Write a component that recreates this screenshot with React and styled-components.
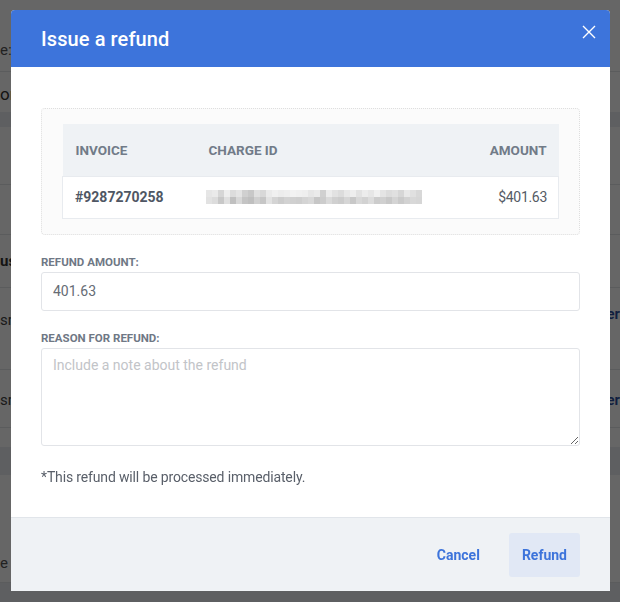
import React from 'react';
import styled, { createGlobalStyle } from 'styled-components';

const GlobalStyle = createGlobalStyle`
  * { box-sizing: border-box; }
  html, body { margin: 0; padding: 0; background: #fff; }
  body {
    font-family: Roboto, "Liberation Sans", Arial, sans-serif;
    width: 620px;
    height: 602px;
    overflow: hidden;
  }
`;

/* ---------- page behind the dialog ---------- */

const Page = styled.div`
  display: flex;
  flex-direction: column;
  width: 620px;
  height: 602px;
`;

const PageRow = styled.div`
  display: flex;
  justify-content: space-between;
  align-items: flex-start;
  height: ${p => p.h}px;
  padding-top: ${p => p.pt || 0}px;
  border-bottom: ${p => (p.line ? '1px solid #e3e5e9' : 'none')};
  background: ${p => (p.band ? '#eceef2' : '#fff')};
  font-size: ${p => p.fs || 15}px;
  line-height: 16px;
  color: #333;
`;

const LeftBit = styled.span`
  font-weight: ${p => (p.bold ? 700 : 400)};
  color: ${p => p.c || '#333'};
`;

const RightBit = styled.span`
  margin-top: ${p => p.mt || 0}px;
  color: #2a4d9c;
  font-weight: 600;
`;

/* ---------- dialog ---------- */

const Overlay = styled.div`
  position: fixed;
  inset: 0;
  background: rgba(0, 0, 0, 0.6);
  display: flex;
  justify-content: center;
  align-items: flex-start;
  padding: 10px 10px 0 11px;
`;

const Modal = styled.div`
  position: relative;
  width: 599px;
  height: 581px;
  background: #fff;
  border-radius: 4px 4px 0 0;
  display: flex;
  flex-direction: column;
  overflow: hidden;
`;

const Header = styled.div`
  height: 57px;
  flex: none;
  background: #3d74db;
  display: flex;
  align-items: center;
  padding: 0 30px;
`;

const Title = styled.h2`
  margin: 0;
  font-size: 20px;
  font-weight: 500;
  color: #fff;
  letter-spacing: 0.1px;
`;

const CloseButton = styled.button`
  position: absolute;
  top: 15px;
  right: 14px;
  width: 14px;
  height: 14px;
  padding: 0;
  border: none;
  background: transparent;
  cursor: pointer;
  display: flex;
`;

const Body = styled.div`
  flex: 1;
  padding: 41px 30px 0;
  display: flex;
  flex-direction: column;
`;

const Card = styled.div`
  background: #fbfbfb;
  border: 1px dotted #dedede;
  border-radius: 4px;
  padding: 15px 20px;
  margin-bottom: 19px;
`;

const Table = styled.table`
  width: 100%;
  border-collapse: collapse;
`;

const HeadCell = styled.th`
  height: 52px;
  background: #eff2f5;
  padding: 0 ${p => (p.right ? 12 : 13)}px;
  text-align: ${p => (p.right ? 'right' : 'left')};
  width: ${p => p.w || 'auto'};
  font-size: 13.5px;
  font-weight: 700;
  color: #717b88;
  text-transform: uppercase;
`;

const Cell = styled.td`
  height: 42px;
  background: #fff;
  border-top: 1px solid #e8ebef;
  border-bottom: 1px solid #e8ebef;
  border-left: ${p => (p.first ? '1px solid #e8ebef' : 'none')};
  border-right: ${p => (p.right ? '1px solid #e8ebef' : 'none')};
  padding: 0 ${p => (p.right ? 11 : p.first ? 12 : 10)}px;
  text-align: ${p => (p.right ? 'right' : 'left')};
  font-size: 14px;
  letter-spacing: ${p => (p.right ? '-0.3px' : '0')};
  font-weight: ${p => (p.bold ? 700 : 400)};
  color: ${p => (p.bold ? '#4f5764' : '#555b65')};
`;

const Label = styled.label`
  display: block;
  font-size: 11.5px;
  font-weight: 700;
  line-height: 16px;
  color: #6f7885;
  text-transform: uppercase;
  margin-bottom: 2px;
`;

const Input = styled.input`
  display: block;
  width: 100%;
  height: 39px;
  border: 1px solid #e2e4e8;
  border-radius: 3px;
  padding: 0 11px 1px;
  font-family: inherit;
  font-size: 14px;
  color: #666c75;
  margin-bottom: 19px;
  outline: none;
`;

const TextArea = styled.textarea`
  display: block;
  width: 100%;
  height: 98px;
  border: 1px solid #e2e4e8;
  border-radius: 3px;
  padding: 7px 11px;
  font-family: inherit;
  font-size: 14px;
  line-height: 18px;
  color: #555;
  resize: vertical;
  outline: none;

  &::placeholder {
    color: #c2c4c8;
  }
`;

const Note = styled.p`
  margin: 21px 0 0;
  font-size: 14px;
  letter-spacing: -0.15px;
  line-height: 20px;
  color: #595f69;
`;

const Footer = styled.div`
  height: 74px;
  flex: none;
  background: #eff2f5;
  border-top: 1px solid #e1e5ea;
  display: flex;
  justify-content: flex-end;
  align-items: center;
  gap: 15px;
  padding: 0 30px;
`;

const Button = styled.button`
  height: 44px;
  padding: 0 ${p => (p.filled ? 13 : 14)}px;
  border: none;
  border-radius: 3px;
  background: ${p => (p.filled ? '#e1e8f5' : 'transparent')};
  color: #3d74db;
  font-family: inherit;
  font-size: 14px;
  font-weight: 700;
  cursor: pointer;
`;

// pixelated (redacted) charge id
const blurCols = [
  ['e6', 'e2'], ['ea', 'dc'], ['d6', 'c8'], ['ee', 'e0'], ['dc', 'c0'], ['e4', 'd8'],
  ['d0', 'c4'], ['c8', 'bf'], ['e0', 'd0'], ['d8', 'c6'], ['ea', 'e2'], ['f0', 'd4'],
  ['ec', 'cc'], ['ee', 'd2'], ['f2', 'd0'], ['f0', 'ce'], ['ee', 'd4'], ['e6', 'd8'],
  ['ea', 'c6'], ['d0', 'cc'], ['ec', 'da'], ['e2', 'd0'], ['dc', 'cc'], ['e8', 'd6'],
  ['ee', 'c8'], ['e2', 'd8'], ['ec', 'd2'], ['e6', 'dc'], ['f0', 'cc'], ['e4', 'd0'],
  ['dc', 'c8'], ['e0', 'd4'], ['d6', 'ca'], ['e8', 'd2'], ['e0', 'd8'], ['d8', 'd6'],
];

const Redacted = () => (
  <svg width="216" height="14" viewBox="0 0 216 14" style={{ display: 'block' }}>
    {blurCols.map((col, i) =>
      col.map((g, j) => (
        <rect key={`${i}-${j}`} x={i * 6} y={j * 7} width="6" height="7" fill={`#${g}${g}${g}`} />
      ))
    )}
  </svg>
);

const App = () => {
  return (
    <>
      <GlobalStyle />
      <Page>
        <PageRow h={72} pt={42} line><LeftBit c="#555">e:</LeftBit></PageRow>
        <PageRow h={40} pt={14} fs={17}><LeftBit>or</LeftBit></PageRow>
        <PageRow h={15} band />
        <PageRow h={58} line />
        <PageRow h={50} line />
        <PageRow h={53} pt={18} line><LeftBit bold>ust</LeftBit></PageRow>
        <PageRow h={82} pt={24} line>
          <LeftBit c="#444">sm</LeftBit>
          <RightBit mt={-6}>er</RightBit>
        </PageRow>
        <PageRow h={58} pt={22} line>
          <LeftBit c="#444">sm</LeftBit>
          <RightBit>er</RightBit>
        </PageRow>
        <PageRow h={19} />
        <PageRow h={28} band />
        <PageRow h={108} pt={80} line><LeftBit c="#555">e a</LeftBit></PageRow>
        <PageRow h={19} band />
      </Page>

      <Overlay>
        <Modal>
          <Header>
            <Title>Issue a refund</Title>
            <CloseButton aria-label="Close">
              <svg width="14" height="14" viewBox="0 0 14 14">
                <path d="M1 1L13 13M13 1L1 13" stroke="#fff" strokeWidth="1.4" fill="none" />
              </svg>
            </CloseButton>
          </Header>

          <Body>
            <Card>
              <Table>
                <thead>
                  <tr>
                    <HeadCell w="133px">Invoice</HeadCell>
                    <HeadCell>Charge ID</HeadCell>
                    <HeadCell right>Amount</HeadCell>
                  </tr>
                </thead>
                <tbody>
                  <tr>
                    <Cell first bold>#9287270258</Cell>
                    <Cell><Redacted /></Cell>
                    <Cell right>$401.63</Cell>
                  </tr>
                </tbody>
              </Table>
            </Card>

            <Label>Refund amount:</Label>
            <Input defaultValue="401.63" />

            <Label>Reason for refund:</Label>
            <TextArea placeholder="Include a note about the refund" />

            <Note>*This refund will be processed immediately.</Note>
          </Body>

          <Footer>
            <Button>Cancel</Button>
            <Button filled>Refund</Button>
          </Footer>
        </Modal>
      </Overlay>
    </>
  );
};

export default App;
